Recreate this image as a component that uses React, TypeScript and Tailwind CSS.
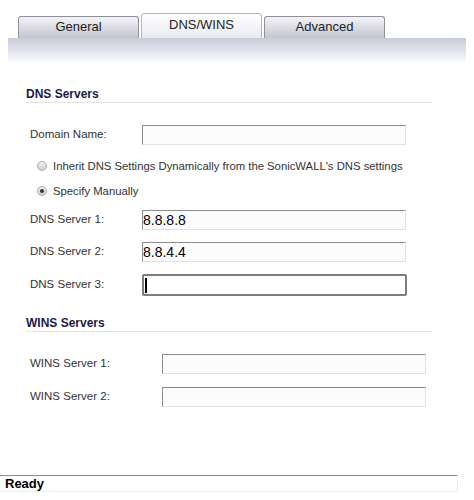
import { ReactElement } from "react";

const font = { fontFamily: '"Liberation Sans", Arial, sans-serif' };

const Tab = ({ label, active }: { label: string; active?: boolean }): ReactElement => (
  <div
    className={
      active
        ? "w-[121px] h-[25px] flex items-center justify-center pb-[3px] rounded-t-[4px] border border-b-0 border-[#b4b6c0] bg-gradient-to-b from-white to-[#e9eaf1] text-[13px] text-[#222]"
        : "w-[121px] h-[22px] flex items-center justify-center pb-[2px] rounded-t-[3px] border border-b-0 border-[#8f909a] bg-gradient-to-b from-[#f4f4f6] to-[#c3c5d1] text-[13px] text-[#222]"
    }
  >
    {label}
  </div>
);

const Field = ({
  label,
  labelWidth,
  value,
  focused,
  className,
}: {
  label: string;
  labelWidth: string;
  value?: string;
  focused?: boolean;
  className: string;
}): ReactElement => (
  <div className={"flex items-center " + className}>
    <div className={"pl-[4px] text-[11.5px] text-[#333] " + labelWidth}>{label}</div>
    {focused ? (
      <div className="w-[265px] h-[22px] rounded-[2px] border-2 border-[#7d7d7d] bg-white flex items-center pl-[1px]">
        <div className="w-[2px] h-[15px] bg-black" />
      </div>
    ) : (
      <div className="w-[264px] h-[20px] border border-t-[#8d8d8d] border-l-[#8d8d8d] border-r-[#e2e2e2] border-b-[#e2e2e2] bg-[#fcfcfc] flex items-center text-[14px] text-black leading-none">
        {value}
      </div>
    )}
  </div>
);

const Radio = ({ label, checked, className }: { label: string; checked?: boolean; className: string }): ReactElement => (
  <div className={"flex items-center h-[20px] pl-[11px] " + className}>
    <div className="w-[10px] h-[10px] rounded-full border border-[#a9a9a9] bg-gradient-to-b from-[#f2f2f2] to-[#cfcfcf] flex items-center justify-center">
      {checked && <div className="w-[4px] h-[4px] rounded-full bg-[#333]" />}
    </div>
    <span className="ml-[6px] text-[11.3px] text-[#333]">{label}</span>
  </div>
);

const Heading = ({ text, className }: { text: string; className: string }): ReactElement => (
  <div className={"w-[406px] border-b border-[#e4e4e4] text-[12px] leading-[15px] font-bold text-[#1c1c48] " + className}>
    {text}
  </div>
);

export default function App(): ReactElement {
  return (
    <div className="w-[474px] h-[500px] bg-white flex flex-col" style={font}>
      <div className="h-[38px] flex items-end gap-[2px] pl-[18px]">
        <Tab label="General" />
        <Tab label="DNS/WINS" active />
        <Tab label="Advanced" />
      </div>
      <div className="mx-[8px] h-[26px] bg-gradient-to-b from-[#c8cbd9] to-white" />

      <div className="pl-[26px] flex flex-col">
        <Heading text="DNS Servers" className="mt-[23px]" />
        <Field label="Domain Name:" labelWidth="w-[116px]" className="mt-[22px]" />
        <Radio label="Inherit DNS Settings Dynamically from the SonicWALL's DNS settings" className="mt-[11px]" />
        <Radio label="Specify Manually" checked className="mt-[5px]" />
        <Field label="DNS Server 1:" labelWidth="w-[116px]" value="8.8.8.8" className="mt-[9px]" />
        <Field label="DNS Server 2:" labelWidth="w-[116px]" value="8.8.4.4" className="mt-[12px]" />
        <Field label="DNS Server 3:" labelWidth="w-[116px]" focused className="mt-[12px]" />

        <Heading text="WINS Servers" className="mt-[20px]" />
        <Field label="WINS Server 1:" labelWidth="w-[136px]" className="mt-[22px]" />
        <Field label="WINS Server 2:" labelWidth="w-[136px]" className="mt-[13px]" />
      </div>

      <div className="mt-auto mb-[8px] w-[458px] h-[17px] border-t border-t-[#8e8e8e] border-b border-b-[#ececec] border-r border-r-[#ececec] flex items-center pl-[5px] text-[13px] font-bold text-black">
        Ready
      </div>
    </div>
  );
}
